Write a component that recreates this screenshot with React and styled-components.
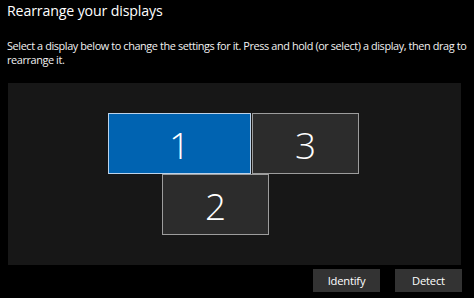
import React from "react";
import styled, { createGlobalStyle } from "styled-components";

const Global = createGlobalStyle`
  html, body { margin: 0; padding: 0; background: #000; }
  body { font-family: "Open Sans", "Noto Sans", sans-serif; color: #fff; }
`;

const Page = styled.div`
  width: 474px;
  height: 298px;
  box-sizing: border-box;
  padding: 0 0 0 8px;
  display: flex;
  flex-direction: column;
  overflow: hidden;
`;

const Title = styled.h1`
  margin: 1px 0 0 -1px;
  font-size: 14.2px;
  font-weight: 400;
  line-height: 20px;
  letter-spacing: -0.15px;
`;

const Description = styled.p`
  margin: 18px 0 0 -1px;
  font-size: 10.9px;
  line-height: 13.5px;
  letter-spacing: -0.4px;
  color: #f2f2f2;
  width: 466px;
`;

const Canvas = styled.div`
  position: relative;
  margin-top: 17px;
  width: 453px;
  height: 182px;
  background: #171717;
`;

const Display = styled.div`
  position: absolute;
  box-sizing: border-box;
  display: flex;
  align-items: center;
  justify-content: center;
  border: 1px solid ${(p) => (p.$active ? "#bcd3ea" : "#9d9d9d")};
  background: ${(p) => (p.$active ? "#0063b1" : "#2c2c2c")};
  font-size: 37px;
  font-weight: 300;
  color: #fff;
  line-height: 1;
  padding-top: 2px;
`;

const Actions = styled.div`
  display: flex;
  justify-content: flex-end;
  gap: 15px;
  margin-top: 4px;
  width: 454px;
`;

const Button = styled.button`
  width: 67px;
  height: 23px;
  border: none;
  background: #333333;
  color: #fff;
  font-family: "Open Sans", "Noto Sans", sans-serif;
  font-size: 11.2px;
  letter-spacing: -0.2px;
  padding: 0;
`;

const displays = [
  { n: 1, x: 100, y: 30, w: 143, h: 61, active: true },
  { n: 3, x: 244, y: 30, w: 107, h: 61 },
  { n: 2, x: 154, y: 91, w: 107, h: 61 },
];

export default function App() {
  return (
    <Page>
      <Global />
      <Title>Rearrange your displays</Title>
      <Description>
        Select a display below to change the settings for it. Press and hold (or select) a display, then drag to rearrange it.
      </Description>
      <Canvas>
        {displays.map((d) => (
          <Display
            key={d.n}
            $active={d.active}
            style={{ left: d.x, top: d.y, width: d.w, height: d.h }}
          >
            {d.n}
          </Display>
        ))}
      </Canvas>
      <Actions>
        <Button>Identify</Button>
        <Button>Detect</Button>
      </Actions>
    </Page>
  );
}
